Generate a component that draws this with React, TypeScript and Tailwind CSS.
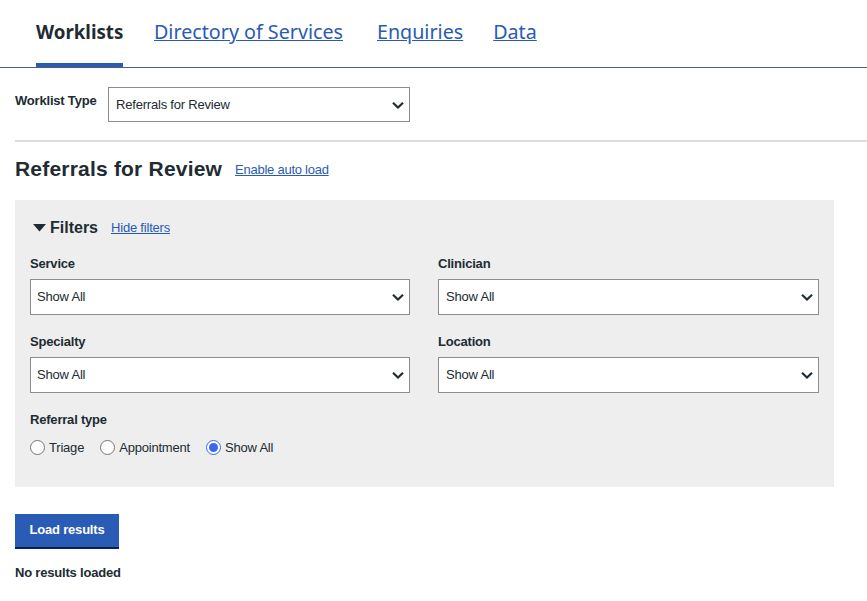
const body = "font-['Liberation_Sans',Arial,sans-serif]";

function Select({ value, className = "" }: { value: string; className?: string }) {
  return (
    <div className={`relative flex items-center border border-[#8c8c8c] bg-white text-[13px] tracking-[-0.2px] text-[#212b32] ${className}`}>
      {value}
      <svg className="absolute right-[4px] top-1/2 -translate-y-1/2" width="14" height="14" viewBox="0 0 14 14" fill="none">
        <path d="M2 4.8 L7 9.5 L12 4.8" stroke="#212b32" strokeWidth="2.2" />
      </svg>
    </div>
  );
}

function Field({ label, value, inset }: { label: string; value: string; inset: string }) {
  return (
    <div className="flex flex-col">
      <label className="mb-[7px] mt-[1px] h-[16px] text-[13px] leading-[16px] font-bold tracking-[-0.2px] text-[#212b32]">{label}</label>
      <Select value={value} className={`h-[36px] ${inset}`} />
    </div>
  );
}

function Radio({ label, checked }: { label: string; checked?: boolean }) {
  return (
    <div className="flex items-center">
      <span className={`mr-[4px] flex h-[15px] w-[15px] items-center justify-center rounded-full border bg-white ${checked ? "border-[#3b66f5]" : "border-[#767676]"}`}>
        {checked && <span className="h-[9px] w-[9px] rounded-full bg-[#3b66f5]"></span>}
      </span>
      <span className="pt-[1px] text-[13px] tracking-[-0.2px] text-[#212b32]">{label}</span>
    </div>
  );
}

export default function App() {
  return (
    <div className={`${body} h-[601px] w-[867px] overflow-hidden bg-white`}>
      <nav className="flex h-[68px] border-b border-[#4c6272] pl-[36px] font-['Noto_Sans',sans-serif] text-[19.7px] leading-[27px]">
        <a className="h-[67px] w-[87px] border-b-[4px] border-[#2a5bb5] pt-[18px] text-[18.7px] font-bold text-[#212b32]">Worklists</a>
        <a className="ml-[31px] pt-[18px] text-[#2a5bb5] underline">Directory of Services</a>
        <a className="ml-[34px] pt-[18px] text-[#2a5bb5] underline">Enquiries</a>
        <a className="ml-[30px] pt-[18px] text-[#2a5bb5] underline">Data</a>
      </nav>

      <div className="ml-[15px]">
        <div className="mt-[19px] flex items-start">
          <span className="mt-[6px] w-[93px] text-[13px] leading-[16px] font-bold tracking-[-0.2px] text-[#212b32]">Worklist Type</span>
          <Select value="Referrals for Review" className="h-[35px] w-[302px] pl-[7px]" />
        </div>

        <div className="mt-[18px] h-[2px] bg-[#dcdcdc]"></div>

        <div className="mt-[15px] flex h-[24px] items-center">
          <h1 className="text-[21px] leading-[24px] font-bold tracking-[0.2px] text-[#212b32]">Referrals for Review</h1>
          <a className="ml-[13px] pt-[1px] text-[13px] tracking-[-0.25px] text-[#2a5bb5] underline">Enable auto load</a>
        </div>

        <section className="mt-[19px] h-[287px] w-[819px] bg-[#eeeeee] px-[15px] pt-[19px]">
          <div className="flex h-[17px] items-center">
            <svg className="ml-[3px] mr-[4px]" width="13" height="8" viewBox="0 0 13 8">
              <path d="M0 0 H13 L6.5 7.5 Z" fill="#212b32" />
            </svg>
            <span className="text-[16px] leading-[17px] font-bold text-[#212b32]">Filters</span>
            <a className="ml-[13px] text-[13px] tracking-[-0.2px] text-[#2a5bb5] underline">Hide filters</a>
          </div>

          <div className="mt-[19px] grid grid-cols-[380px_381px] gap-x-[28px] gap-y-[18px]">
            <Field label="Service" value="Show All" inset="pl-[6px]" />
            <Field label="Clinician" value="Show All" inset="pl-[7px]" />
            <Field label="Specialty" value="Show All" inset="pl-[6px]" />
            <Field label="Location" value="Show All" inset="pl-[7px]" />
          </div>

          <div className="mt-[19px] h-[16px] text-[13px] leading-[16px] font-bold tracking-[-0.2px] text-[#212b32]">Referral type</div>
          <div className="mt-[9px] flex gap-[16px]">
            <Radio label="Triage" />
            <Radio label="Appointment" />
            <Radio label="Show All" checked />
          </div>
        </section>

        <button className="mt-[27px] block h-[35px] w-[104px] border-b-2 border-[#00245a] bg-[#2a5bb5] pb-[2px] text-[13px] font-bold tracking-[-0.2px] text-white">Load results</button>

        <p className="mt-[16px] text-[13px] leading-[16px] font-bold tracking-[-0.2px] text-[#212b32]">No results loaded</p>
      </div>
    </div>
  );
}
